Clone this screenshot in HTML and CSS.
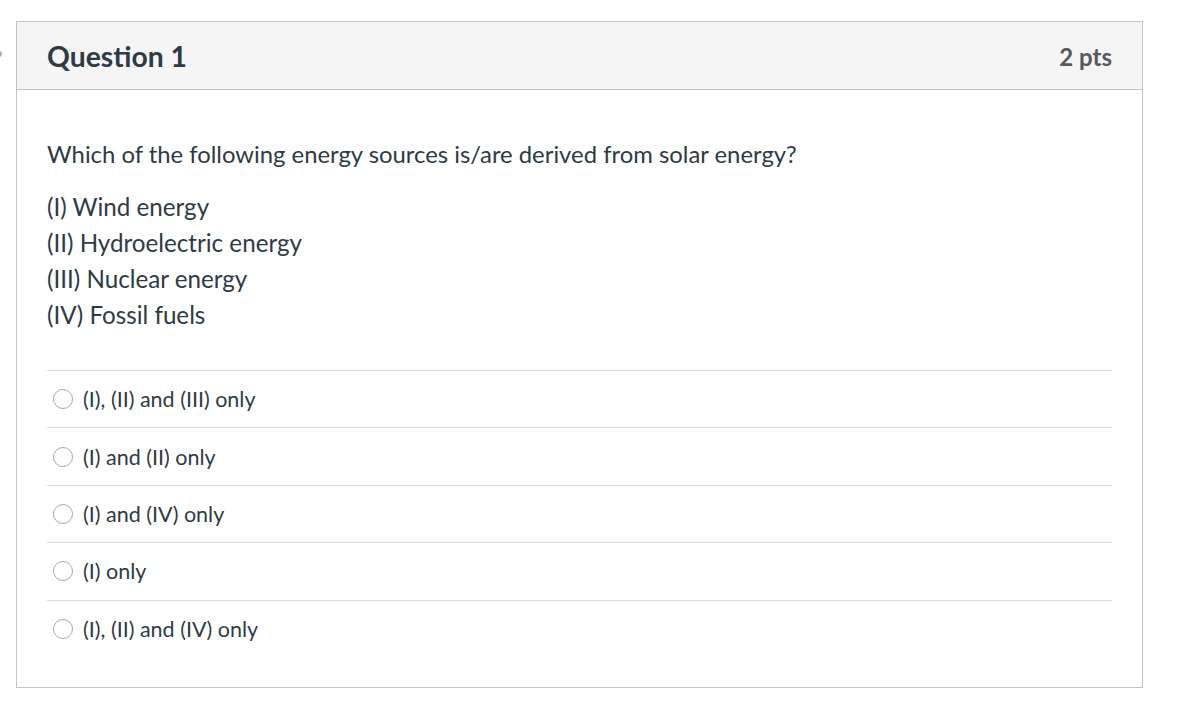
FILE: index.html
```html
<!DOCTYPE html>
<html>
<head>
<meta charset="utf-8">
<link rel="stylesheet" href="styles.css">
</head>
<body>
<div class="page">
  <span class="flag"></span>
  <div class="card">
    <div class="header">
      <h2 class="title">Question 1</h2>
      <div class="pts">2 pts</div>
    </div>
    <div class="body">
      <p class="question">Which of the following energy sources is/are derived from solar energy?</p>
      <div class="items">
        <div class="item">(I) Wind energy</div>
        <div class="item">(II) Hydroelectric energy</div>
        <div class="item">(III) Nuclear energy</div>
        <div class="item">(IV) Fossil fuels</div>
      </div>
      <div class="answers">
        <label class="answer"><span class="radio"></span><span class="atext">(I), (II) and (III) only</span></label>
        <label class="answer"><span class="radio"></span><span class="atext">(I) and (II) only</span></label>
        <label class="answer"><span class="radio"></span><span class="atext">(I) and (IV) only</span></label>
        <label class="answer"><span class="radio"></span><span class="atext">(I) only</span></label>
        <label class="answer"><span class="radio"></span><span class="atext">(I), (II) and (IV) only</span></label>
      </div>
    </div>
  </div>
</div>
</body>
</html>
```
FILE: styles.css
```css
html, body {
  margin: 0;
  padding: 0;
  background: #ffffff;
}
body {
  font-family: Lato, "Open Sans", sans-serif;
  color: #2d3b45;
}
.page {
  position: relative;
  padding: 21px 41px 0 16px;
}
.flag {
  position: absolute;
  left: -4px;
  top: 51px;
  width: 6px;
  height: 6px;
  border-radius: 50%;
  background: #9fb3c8;
}
.card {
  border: 1px solid #c4c4c4;
  width: 1127px;
  height: 667px;
  box-sizing: border-box;
}
.header {
  background: #f5f5f5;
  border-bottom: 1px solid #c4c4c4;
  height: 68px;
  box-sizing: border-box;
  display: flex;
  align-items: center;
  justify-content: space-between;
  padding: 0 30px 0 30px;
}
.title {
  margin: 0;
  font-size: 28.3px;
  font-weight: 700;
  color: #2d3b45;
}
.pts {
  font-size: 24px;
  font-weight: 700;
  color: #555a5e;
  padding-top: 2px;
}
.body {
  padding: 49px 30px 0 30px;
}
.question {
  margin: 0;
  font-size: 23.85px;
  line-height: 30px;
}
.items {
  margin-top: 20px;
}
.item {
  font-size: 24.2px;
  line-height: 36px;
}
.answers {
  margin-top: 37px;
}
.answer {
  display: flex;
  align-items: center;
  gap: 10px;
  height: 57.4px;
  border-top: 1px solid #dcdcdc;
  box-sizing: border-box;
  padding-left: 6px;
  font-size: 21.5px;
}
.radio {
  width: 20px;
  height: 20px;
  border: 1px solid #a9a9a9;
  border-radius: 50%;
  box-sizing: border-box;
  background: #fff;
  flex: none;
}
.atext {
  line-height: 26px;
}
```
